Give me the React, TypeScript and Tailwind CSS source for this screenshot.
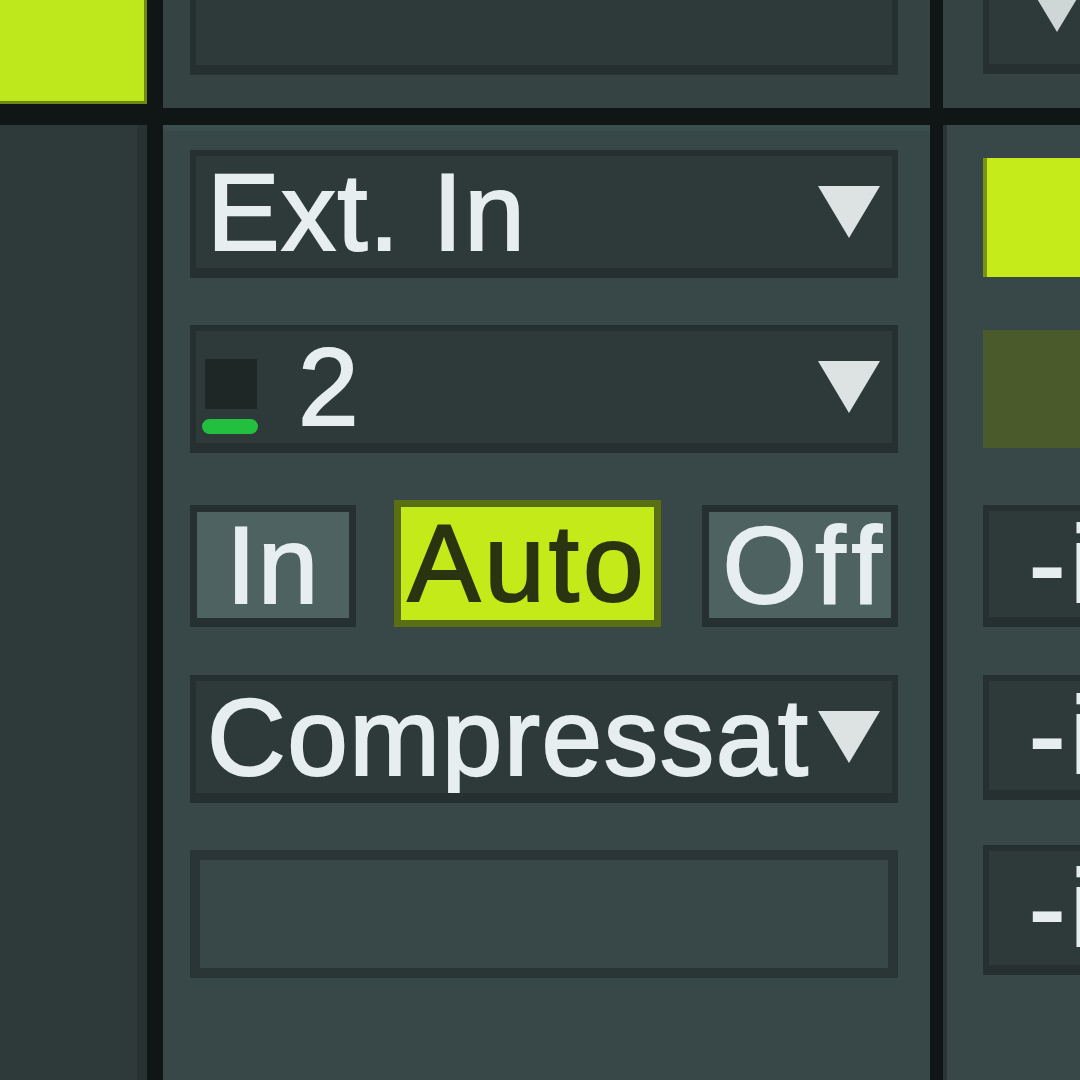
import React from "react";

function Tri({ className = "" }: { className?: string }) {
  return (
    <svg width="62" height="52" viewBox="0 0 62 52" className={className}>
      <polygon points="0,0 62,0 31,52" fill="#dde3e3" />
    </svg>
  );
}

function Box({ children, className = "" }: { children?: React.ReactNode; className?: string }) {
  return (
    <div
      className={
        "box-border border-x-[6px] border-t-[6px] border-b-[10px] border-[#263030] bg-[#2e3a3a] flex items-center " +
        className
      }
    >
      {children}
    </div>
  );
}

function SendBox({ className = "" }: { className?: string }) {
  return (
    <div
      className={
        "box-border border-l-[6px] border-t-[6px] border-b-[10px] border-[#263030] bg-[#2e3a3a] flex items-center pl-[40px] overflow-hidden whitespace-nowrap tracking-[5px] " +
        className
      }
    >
      -inf
    </div>
  );
}

export default function App() {
  return (
    <div className="w-[1080px] h-[1080px] overflow-hidden bg-[#101515] flex flex-col font-['Liberation_Sans',Arial,sans-serif] text-[109px] leading-[109px] tracking-[1.5px] text-[#e6eef0] [-webkit-text-stroke:2px_currentColor]">
      {/* top row */}
      <div className="flex h-[108px] shrink-0">
        <div className="w-[147px] shrink-0 h-[104px] bg-[#bee81c] border-r-[3px] border-b-[3px] border-[#6e8a12]" />
        <div className="w-[16px] shrink-0" />
        <div className="w-[767px] shrink-0 bg-[#354343] pl-[27px] pr-[32px]">
          <div className="h-[75px] bg-[#2e3a3a] border-x-[6px] border-b-[10px] border-[#263030]" />
        </div>
        <div className="w-[13px] shrink-0" />
        <div className="flex-1 bg-[#354343] pl-[40px]">
          <div className="relative h-[74px] bg-[#2e3a3a] border-l-[6px] border-b-[10px] border-[#263030] overflow-hidden">
            <svg width="60" height="50" viewBox="0 0 60 50" className="absolute left-[38px] top-[-18px]">
              <polygon points="0,0 60,0 30,50" fill="#cfd6d6" />
            </svg>
          </div>
        </div>
      </div>
      <div className="h-[17px] shrink-0" />
      {/* bottom row */}
      <div className="flex flex-1">
        <div className="w-[147px] shrink-0 bg-[#2e3939] border-r-[10px] border-[#283232]" />
        <div className="w-[16px] shrink-0" />
        <div className="w-[767px] shrink-0 bg-[#384848] border-t-[6px] border-[#3c4d4d] pl-[27px] pr-[32px] pt-[19px] flex flex-col">
          <Box className="h-[128px] pl-[11px] pr-[12px] justify-between">
            <span>Ext. In</span>
            <Tri />
          </Box>
          <Box className="mt-[47px] h-[128px] pl-[9px] pr-[12px]">
            <div className="flex flex-col gap-[10px] mt-[18px]">
              <div className="w-[52px] h-[50px] bg-[#1e2626]" />
              <div className="w-[56px] h-[15px] -ml-[3px] rounded-full bg-[#22c03e]" />
            </div>
            <span className="ml-[40px]">2</span>
            <Tri className="ml-auto" />
          </Box>
          <div className="mt-[47px] h-[128px] flex items-start">
            <div className="mt-[5px] w-[167px] h-[122px] border-[7px] border-b-[9px] border-[#263030] bg-[#4e6262] flex items-center justify-center">
              In
            </div>
            <div className="ml-[38px] w-[269px] h-[127px] border-[7px] border-[#5a6e14] bg-[#c4ea1a] flex items-center justify-center text-[#2b3410] tracking-[4px] overflow-hidden">
              Auto
            </div>
            <div className="ml-[41px] mt-[5px] w-[197px] h-[122px] border-[7px] border-b-[9px] border-[#263030] bg-[#4e6262] flex items-center justify-center tracking-[8px] pl-[12px] overflow-hidden">
              Off
            </div>
          </div>
          <Box className="mt-[47px] h-[128px] pl-[11px] pr-[12px] relative overflow-hidden">
            <span className="whitespace-nowrap">Compressat</span>
            <Tri className="absolute right-[12px] top-[30px]" />
          </Box>
          <div className="mt-[47px] h-[128px] border-[10px] border-[#2a3535] bg-[#384848]" />
        </div>
        <div className="w-[13px] shrink-0" />
        <div className="flex-1 bg-[#384848] border-l-[4px] border-[#2a3434] pl-[36px] pt-[33px] flex flex-col overflow-hidden">
          <div className="h-[119px] bg-[#c5ec1a] border-l-[4px] border-[#7a9212]" />
          <div className="mt-[53px] h-[118px] bg-[#4b5a2b]" />
          <SendBox className="mt-[57px] h-[122px]" />
          <SendBox className="mt-[48px] h-[125px]" />
          <SendBox className="mt-[45px] h-[130px]" />
        </div>
      </div>
    </div>
  );
}
